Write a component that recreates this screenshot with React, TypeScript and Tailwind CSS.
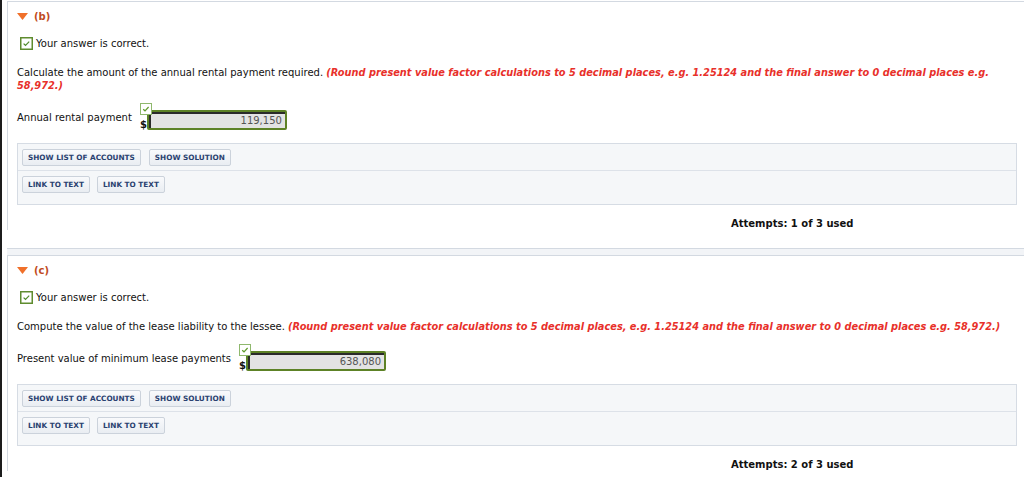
import React from 'react';

const font = { fontFamily: '"DejaVu Sans", Verdana, sans-serif' };

const CheckBox: React.FC<{ small?: boolean }> = ({ small }) =>
  small ? (
    <svg width="12" height="12" viewBox="0 0 12 12" className="block">
      <rect x="0.5" y="0.5" width="11" height="11" fill="#fff" stroke="#8fb86d" />
      <path d="M3.2 6.2 L5 7.8 L8.6 4" fill="none" stroke="#5e9a2a" strokeWidth="1.2" />
    </svg>
  ) : (
    <svg width="13" height="13" viewBox="0 0 13 13" className="block">
      <rect x="0.75" y="0.75" width="11.5" height="11.5" fill="#fff" stroke="#5f8c2f" strokeWidth="1.5" />
      <path d="M3.6 6.6 L5.5 8.3 L9.2 4.6" fill="none" stroke="#4f8a2a" strokeWidth="1.2" />
    </svg>
  );

const Btn: React.FC<{ label: string }> = ({ label }) => (
  <button className="h-[17px] px-[5px] rounded-[2px] border border-[#cbd2db] bg-gradient-to-b from-[#f9fafc] to-[#e9edf2] text-[7.3px] font-bold leading-none text-[#2a4170]">
    {label}
  </button>
);

type PartProps = {
  letter: string;
  question: React.ReactNode;
  label: string;
  value: string;
  attempts: string;
};

const Part: React.FC<PartProps> = ({ letter, question, label, value, attempts }) => (
  <div className="border-t border-l border-[#d3d9e1] pl-[9px] pr-[7px] pt-[8px]">
    <div className="flex items-center gap-[6px] h-[13px] leading-[13px]">
      <svg width="11" height="7" viewBox="0 0 11 7" className="block">
        <path d="M0 0 L11 0 L5.5 7 Z" fill="#f0702a" />
      </svg>
      <span className="text-[10px] font-bold text-[#bf4b1d]">{letter}</span>
    </div>
    <div className="mt-[14px] ml-[3px] flex items-center gap-[3px] h-[13px]">
      <CheckBox />
      <span className="text-[10px] text-[#111]">Your answer is correct.</span>
    </div>
    <div className="mt-[16px] text-[10px] leading-[13px] text-[#111]">{question}</div>
    <div className="mt-[11px] flex items-center h-[27px]">
      <span className="text-[10px] text-[#111] mt-[2px]">{label}</span>
      <div className="relative ml-[8px] flex items-end pt-[7px]">
        <div className="absolute left-0 top-0">
          <CheckBox small />
        </div>
        <span className="w-[7px] text-[10px] font-bold text-[#111] leading-none">$</span>
        <div className="w-[140px] h-[20px] rounded-[2px] border-2 border-[#5d8226] bg-[#e3e3e3] shadow-[inset_2px_2px_0_#2a2a2a] flex items-center justify-end pr-[3px] text-[10px] text-[#555]">
          {value}
        </div>
      </div>
    </div>
    <div className="mt-[13px] border border-[#d6dce4] bg-[#f5f7f9]">
      <div className="flex gap-[8px] pl-[4px] pt-[5px] pb-[4px] border-b border-[#dde2e9]">
        <Btn label="SHOW LIST OF ACCOUNTS" />
        <Btn label="SHOW SOLUTION" />
      </div>
      <div className="flex gap-[7px] pl-[4px] pt-[5px] pb-[11px]">
        <Btn label="LINK TO TEXT" />
        <Btn label="LINK TO TEXT" />
      </div>
    </div>
    <div className="mt-[12px] pl-[714px] text-[10px] font-bold text-[#111] leading-[13px] h-[13px]">
      {attempts}
    </div>
  </div>
);

const Red: React.FC<{ children: React.ReactNode }> = ({ children }) => (
  <span className="font-bold italic text-[9.8px] text-[#e8302a]">{children}</span>
);

export default function App() {
  return (
    <div className="w-[1024px] h-[477px] overflow-hidden bg-white flex" style={font}>
      <div className="w-[2px] bg-[#1c1c1c]" />
      <div className="flex-1 pl-[5px] pt-[1px]">
        <div className="h-[248px] border-b border-[#d3d9e1]">
          <Part
            letter="(b)"
            question={
              <>
                Calculate the amount of the annual rental payment required.{' '}
                <Red>
                  (Round present value factor calculations to 5 decimal places, e.g. 1.25124 and the final answer to 0 decimal places e.g. 58,972.)
                </Red>
              </>
            }
            label="Annual rental payment"
            value="119,150"
            attempts="Attempts: 1 of 3 used"
          />
        </div>
        <div className="h-[6px] bg-[#f2f4f7]" />
        <Part
          letter="(c)"
          question={
            <>
              Compute the value of the lease liability to the lessee.{' '}
              <Red>
                (Round present value factor calculations to 5 decimal places, e.g. 1.25124 and the final answer to 0 decimal places e.g. 58,972.)
              </Red>
            </>
          }
          label="Present value of minimum lease payments"
          value="638,080"
          attempts="Attempts: 2 of 3 used"
        />
      </div>
    </div>
  );
}
